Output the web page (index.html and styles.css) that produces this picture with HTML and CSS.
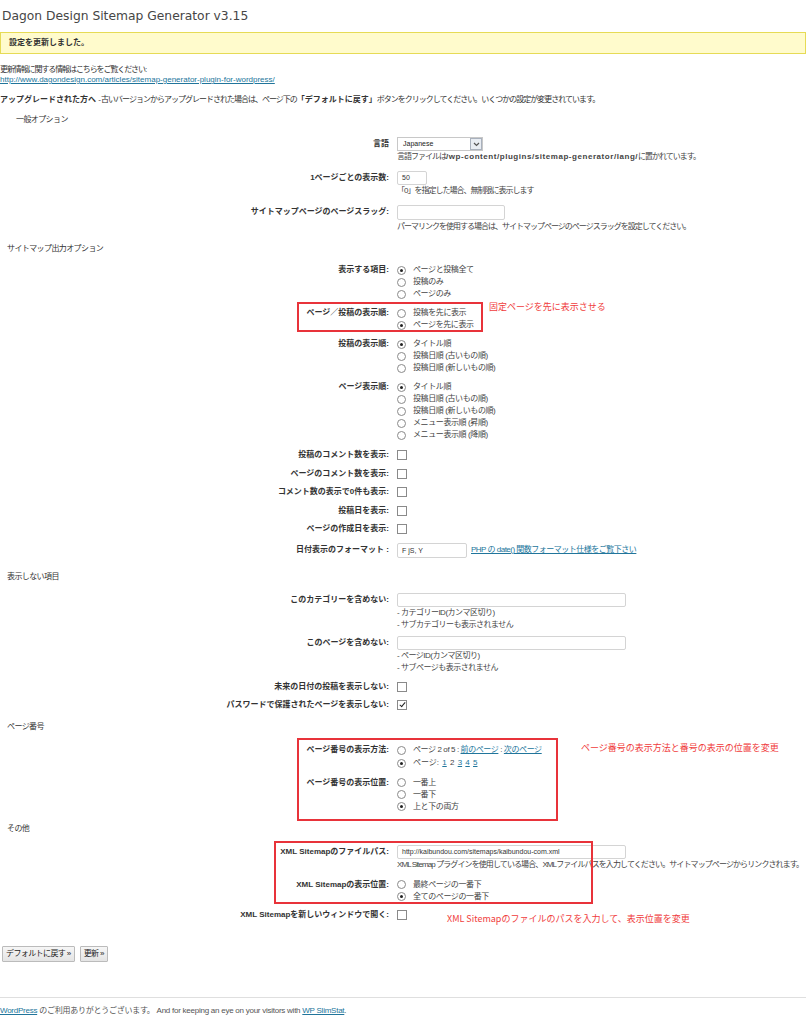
FILE: index.html
```html
<!DOCTYPE html>
<html lang="ja">
<head>
<meta charset="utf-8">
<title>Dagon Design Sitemap Generator</title>
<link rel="stylesheet" href="styles.css">
</head>
<body>
<div class="wrap">
  <h2 class="title">Dagon Design Sitemap Generator v3.15</h2>
  <div class="updated"><strong>設定を更新しました。</strong></div>
  <p class="info"><span class="n">更新情報に関する情報はこちらをご覧ください:</span><br><a href="#">http://www.dagondesign.com/articles/sitemap-generator-plugin-for-wordpress/</a></p>
  <p class="upgrade"><strong>アップグレードされた方へ</strong> <span class="n">- 古いバージョンからアップグレードされた場合は、ページ下の</span><strong>「デフォルトに戻す」</strong><span class="n">ボタンをクリックしてください。いくつかの設定が変更されています。</span></p>

  <h3 class="section first">一般オプション</h3>
  <div class="row input-row lang-row">
    <div class="label">言語</div>
    <div class="field">
      <div class="select"><span>Japanese</span><span class="arrow"><svg width="7" height="5" viewBox="0 0 7 5"><path d="M1 1 L3.5 3.5 L6 1" fill="none" stroke="#555" stroke-width="1.2"/></svg></span></div>
      <div class="desc">言語ファイルは<b class="wide">/wp-content/plugins/sitemap-generator/lang/</b>に置かれています。</div>
    </div>
  </div>
  <div class="row input-row">
    <div class="label">1ページごとの表示数:</div>
    <div class="field">
      <div class="text w30">50</div>
      <div class="desc">「0」を指定した場合、無制限に表示します</div>
    </div>
  </div>
  <div class="row input-row">
    <div class="label">サイトマップページのページスラッグ:</div>
    <div class="field">
      <div class="text w108 h15"></div>
      <div class="desc gap1">パーマリンクを使用する場合は、サイトマップページのページスラッグを設定してください。</div>
    </div>
  </div>

  <h3 class="section">サイトマップ出力オプション</h3>
  <div class="row">
    <div class="label">表示する項目:</div>
    <div class="field">
      <div class="opt"><span class="radio on"></span><span>ページと投稿全て</span></div>
      <div class="opt"><span class="radio"></span><span>投稿のみ</span></div>
      <div class="opt"><span class="radio"></span><span>ページのみ</span></div>
    </div>
  </div>
  <div class="row">
    <div class="label">ページ／投稿の表示順:</div>
    <div class="field">
      <div class="opt"><span class="radio"></span><span>投稿を先に表示</span></div>
      <div class="opt"><span class="radio on"></span><span>ページを先に表示</span></div>
    </div>
  </div>
  <div class="row">
    <div class="label">投稿の表示順:</div>
    <div class="field">
      <div class="opt"><span class="radio on"></span><span>タイトル順</span></div>
      <div class="opt"><span class="radio"></span><span>投稿日順 (古いもの順)</span></div>
      <div class="opt"><span class="radio"></span><span>投稿日順 (新しいもの順)</span></div>
    </div>
  </div>
  <div class="row">
    <div class="label">ページ表示順:</div>
    <div class="field">
      <div class="opt"><span class="radio on"></span><span>タイトル順</span></div>
      <div class="opt"><span class="radio"></span><span>投稿日順 (古いもの順)</span></div>
      <div class="opt"><span class="radio"></span><span>投稿日順 (新しいもの順)</span></div>
      <div class="opt"><span class="radio"></span><span>メニュー表示順 (昇順)</span></div>
      <div class="opt"><span class="radio"></span><span>メニュー表示順 (降順)</span></div>
    </div>
  </div>
  <div class="row cb-row first-cb">
    <div class="label">投稿のコメント数を表示:</div>
    <div class="field"><span class="check"></span></div>
  </div>
  <div class="row cb-row">
    <div class="label">ページのコメント数を表示:</div>
    <div class="field"><span class="check"></span></div>
  </div>
  <div class="row cb-row">
    <div class="label">コメント数の表示で0件も表示:</div>
    <div class="field"><span class="check"></span></div>
  </div>
  <div class="row cb-row">
    <div class="label">投稿日を表示:</div>
    <div class="field"><span class="check"></span></div>
  </div>
  <div class="row cb-row">
    <div class="label">ページの作成日を表示:</div>
    <div class="field"><span class="check"></span></div>
  </div>
  <div class="row input-row date-row">
    <div class="label">日付表示のフォーマット :</div>
    <div class="field inline">
      <div class="text w70 h15">F jS, Y</div>
      <a href="#" class="fmt">PHP の date() 関数フォーマット仕様をご覧下さい</a>
    </div>
  </div>

  <h3 class="section">表示しない項目</h3>
  <div class="row input-row cat-row">
    <div class="label">このカテゴリーを含めない:</div>
    <div class="field">
      <div class="text w229"></div>
      <div class="desc note-line">- カテゴリーID(カンマ区切り)</div>
      <div class="desc note-line">- サブカテゴリーも表示されません</div>
    </div>
  </div>
  <div class="row input-row">
    <div class="label">このページを含めない:</div>
    <div class="field">
      <div class="text w229"></div>
      <div class="desc note-line">- ページID(カンマ区切り)</div>
      <div class="desc note-line">- サブページも表示されません</div>
    </div>
  </div>
  <div class="row cb-row">
    <div class="label">未来の日付の投稿を表示しない:</div>
    <div class="field"><span class="check"></span></div>
  </div>
  <div class="row cb-row">
    <div class="label">パスワードで保護されたページを表示しない:</div>
    <div class="field"><span class="check on"></span></div>
  </div>

  <h3 class="section">ページ番号</h3>
  <div class="row tall">
    <div class="label">ページ番号の表示方法:</div>
    <div class="field">
      <div class="opt"><span class="radio"></span><span>ページ 2 of 5 : <a href="#">前のページ</a> : <a href="#">次のページ</a></span></div>
      <div class="opt"><span class="radio on"></span><span class="nums">ページ: <a href="#">1</a> 2 <a href="#">3</a> <a href="#">4</a> <a href="#">5</a></span></div>
    </div>
  </div>
  <div class="row">
    <div class="label">ページ番号の表示位置:</div>
    <div class="field">
      <div class="opt"><span class="radio"></span><span>一番上</span></div>
      <div class="opt"><span class="radio"></span><span>一番下</span></div>
      <div class="opt"><span class="radio on"></span><span>上と下の両方</span></div>
    </div>
  </div>

  <h3 class="section">その他</h3>
  <div class="row input-row xml-row">
    <div class="label">XML Sitemapのファイルパス:</div>
    <div class="field">
      <div class="text w229">http://kaibundou.com/sitemaps/kaibundou-com.xml</div>
      <div class="desc xml">XML Sitemap プラグインを使用している場合、XMLファイルパスを入力してください。サイトマップページからリンクされます。</div>
    </div>
  </div>
  <div class="row">
    <div class="label">XML Sitemapの表示位置:</div>
    <div class="field">
      <div class="opt"><span class="radio"></span><span>最終ページの一番下</span></div>
      <div class="opt"><span class="radio on"></span><span>全てのページの一番下</span></div>
    </div>
  </div>
  <div class="row cb-row xml-cb">
    <div class="label">XML Sitemapを新しいウィンドウで開く:</div>
    <div class="field"><span class="check"></span></div>
  </div>

  <div class="buttons">
    <span class="button">デフォルトに戻す »</span>
    <span class="button">更新 »</span>
  </div>

  <div class="footer"><a href="#">WordPress</a> のご利用ありがとうございます。 And for keeping an eye on your visitors with <a href="#">WP SlimStat</a>.</div>

  <div class="mark box1"></div>
  <div class="mark box2"></div>
  <div class="mark box3"></div>
  <div class="note note1">固定ページを先に表示させる</div>
  <div class="note note2">ページ番号の表示方法と番号の表示の位置を変更</div>
  <div class="note note3">XML Sitemapのファイルのパスを入力して、表示位置を変更</div>
</div>
</body>
</html>
```

FILE: styles.css
```css
html, body {
  margin: 0;
  padding: 0;
  background: #fff;
}
body {
  font-family: "Liberation Sans", "Noto Sans CJK JP", sans-serif;
  font-size: 8px;
  color: #333;
}
.wrap {
  position: relative;
  width: 806px;
  height: 1024px;
  overflow: hidden;
}
a { color: #21759b; }
.n { letter-spacing: -1px; }
.title {
  margin: 6px 0 0 2px;
  font-family: "DejaVu Sans", sans-serif;
  font-weight: normal;
  font-size: 12.3px;
  line-height: 20px;
  color: #464646;
}
.updated {
  margin-top: 6px;
  height: 20px;
  line-height: 20px;
  background: #fffbcc;
  border: 1px solid #e6db55;
  padding-left: 8px;
  font-size: 8px;
}
.info {
  margin: 11px 0 0;
  line-height: 10px;
}
.info .n { letter-spacing: -1.1px; }
.upgrade {
  margin: 10px 0 0;
  line-height: 10px;
}
.section {
  margin: 6px 0 6px 7px;
  font-size: 8px;
  font-weight: normal;
  line-height: 12px;
  color: #333;
  letter-spacing: -0.6px;
}
.section.first { margin: 9px 0 6px 16px; }
.row {
  display: grid;
  grid-template-columns: 389px 1fr;
  column-gap: 8px;
  padding: 3px 0 4px;
}
.input-row { padding-top: 4px; }
.lang-row { padding-top: 5px; }
.lang-row .label { line-height: 10px; }
.date-row { padding-bottom: 7px; }
.cat-row { padding-bottom: 1px; }
.xml-row { padding-bottom: 5px; }
.cb-row { padding: 3px 0 3.5px; }
.first-cb { padding-top: 4px; }
.xml-cb { padding-top: 2px; }
.tall { padding-top: 5px; padding-bottom: 4px; }
.tall .opt { height: 13px; }
.label {
  text-align: right;
  font-weight: bold;
  line-height: 12px;
  white-space: nowrap;
}
.input-row .label { line-height: 14px; }
.field { line-height: 12px; }
.field.inline { display: flex; align-items: center; gap: 4px; }
.opt {
  display: flex;
  align-items: center;
  height: 12px;
  white-space: nowrap;
  color: #444;
  letter-spacing: -0.4px;
}
.opt .nums { letter-spacing: 0; word-spacing: 1px; }
.radio {
  box-sizing: border-box;
  flex: none;
  width: 9px;
  height: 9px;
  border: 1px solid #8a8a8a;
  border-radius: 50%;
  background: #fff;
  margin-right: 7px;
  display: flex;
  align-items: center;
  justify-content: center;
}
.radio.on::after {
  content: "";
  width: 3px;
  height: 3px;
  border-radius: 50%;
  background: #222;
}
.check {
  box-sizing: border-box;
  display: block;
  width: 10px;
  height: 10px;
  margin-top: 1px;
  border: 1px solid #8a8a8a;
  background: #fff;
  position: relative;
}
.check.on::after {
  content: "";
  position: absolute;
  left: 2.5px;
  top: 0px;
  width: 2px;
  height: 5px;
  border: solid #222;
  border-width: 0 1.5px 1.5px 0;
  transform: rotate(40deg);
}
.select {
  box-sizing: border-box;
  width: 86px;
  height: 14px;
  border: 1px solid #c8c8c8;
  background: #fff;
  display: flex;
  align-items: center;
  justify-content: space-between;
  padding-left: 5px;
  font-size: 7px;
  color: #222;
}
.select .arrow {
  box-sizing: border-box;
  width: 12px;
  height: 12px;
  border: 1px solid #a9b1bd;
  background: #e9edf3;
  display: flex;
  align-items: center;
  justify-content: center;
}
.text {
  box-sizing: border-box;
  height: 14px;
  border: 1px solid #d4d4d4;
  border-radius: 2px;
  background: #fff;
  padding-left: 4px;
  line-height: 12px;
  font-size: 7px;
  color: #333;
}
.text.h15 { height: 15px; line-height: 13px; }
.w30 { width: 30px; }
.w70 { width: 70px; }
.w108 { width: 108px; }
.w229 { width: 229px; }
.desc {
  line-height: 12px;
  color: #444;
  white-space: nowrap;
  letter-spacing: -1px;
}
.desc.gap1 { margin-top: 1px; }
.desc .wide { letter-spacing: 0.55px; }
.desc.xml { letter-spacing: -0.9px; }
.desc.note-line { letter-spacing: -0.5px; }
.fmt { white-space: nowrap; letter-spacing: -0.5px; }
.buttons {
  margin: 22px 0 0 2px;
  display: flex;
  gap: 5px;
}
.button {
  box-sizing: border-box;
  height: 16px;
  line-height: 14px;
  padding: 0 3px;
  border: 1px solid #bbb;
  background: linear-gradient(#f6f6f6, #e4e4e4);
  color: #222;
  border-radius: 1px;
  letter-spacing: -0.6px;
}
.footer {
  position: absolute;
  left: 0;
  right: 0;
  top: 997px;
  border-top: 1px solid #dfdfdf;
  padding-top: 7px;
  line-height: 12px;
  color: #555;
  letter-spacing: -0.25px;
}
.mark {
  position: absolute;
  border: 2px solid #e8333a;
  box-sizing: border-box;
}
.box1 { left: 297px; top: 302px; width: 186px; height: 30px; }
.box2 { left: 297px; top: 738px; width: 261px; height: 83px; }
.box3 { left: 274px; top: 841px; width: 319px; height: 63px; }
.note {
  position: absolute;
  font-family: "Noto Sans CJK JP", sans-serif;
  font-size: 9px;
  line-height: 12px;
  color: #f03c3c;
  white-space: nowrap;
}
.note1 { left: 489px; top: 301px; }
.note2 { left: 581px; top: 742px; }
.note3 { left: 447px; top: 913px; }
```
